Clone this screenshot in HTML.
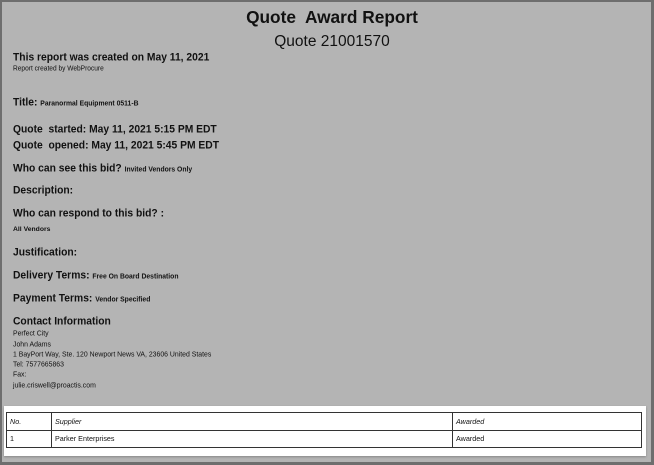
<!DOCTYPE html>
<html><head><style>
*{margin:0;padding:0;box-sizing:border-box}
body{width:654px;height:465px;background:#fff;position:relative;overflow:hidden;font-family:"Liberation Sans",Arial,sans-serif;color:#111}
#frame{position:absolute;left:0;top:0;width:654px;height:465px;background:#b4b4b4;border:2px solid #6e6e6e;border-right-width:3px;border-bottom-width:3px}
.t{position:absolute;white-space:nowrap;line-height:1}
.b{font-weight:bold;font-size:10.3px;transform:scaleY(1.08);transform-origin:0 0}
.s{font-weight:bold;font-size:6.8px}
.n{font-size:6.9px;transform:scaleY(1.1);transform-origin:0 0}
#white{position:absolute;left:4px;top:406px;width:642px;height:50px;background:#fff;box-shadow:0 1px 2px #888}
table{position:absolute;left:6px;top:412px;width:636px;border-collapse:collapse;font-size:7.2px}
td{border:1px solid #333;height:17.5px;padding:0 3px;vertical-align:middle}
</style></head><body>
<div id="frame"></div>
<div class="t" style="left:0;width:664px;text-align:center;top:9px;font-size:17.3px;font-weight:bold">Quote&nbsp; Award Report</div>
<div class="t" style="left:0;width:664px;text-align:center;top:34px;font-size:15.5px">Quote 21001570</div>
<div class="t b" style="left:13px;top:53px">This report was created on May 11, 2021</div>
<div class="t n" style="left:13px;top:66px;font-size:6.6px">Report created by WebProcure</div>
<div class="t b" style="left:13px;top:98px">Title: <span class="s">Paranormal Equipment 0511-B</span></div>
<div class="t b" style="left:13px;top:125px">Quote&nbsp; started: May 11, 2021 5:15 PM EDT</div>
<div class="t b" style="left:13px;top:141px">Quote&nbsp; opened: May 11, 2021 5:45 PM EDT</div>
<div class="t b" style="left:13px;top:164px">Who can see this bid? <span class="s">Invited Vendors Only</span></div>
<div class="t b" style="left:13px;top:186px">Description:</div>
<div class="t b" style="left:13px;top:209px">Who can respond to this bid? :</div>
<div class="t s" style="left:13px;top:227px">All Vendors</div>
<div class="t b" style="left:13px;top:248px">Justification:</div>
<div class="t b" style="left:13px;top:271px">Delivery Terms: <span class="s">Free On Board Destination</span></div>
<div class="t b" style="left:13px;top:294px">Payment Terms: <span class="s">Vendor Specified</span></div>
<div class="t b" style="left:13px;top:317px">Contact Information</div>
<div class="t n" style="left:13px;top:331px">Perfect City</div>
<div class="t n" style="left:13px;top:342px">John Adams</div>
<div class="t n" style="left:13px;top:352px">1 BayPort Way, Ste. 120 Newport News VA, 23606 United States</div>
<div class="t n" style="left:13px;top:362px">Tel: 7577665863</div>
<div class="t n" style="left:13px;top:372px">Fax:</div>
<div class="t n" style="left:13px;top:383px">julie.criswell@proactis.com</div>
<div id="white"></div>
<table>
<tr style="font-style:italic"><td style="width:45px">No.</td><td style="width:401px">Supplier</td><td>Awarded</td></tr>
<tr><td>1</td><td>Parker Enterprises</td><td>Awarded</td></tr>
</table>
</body></html>
